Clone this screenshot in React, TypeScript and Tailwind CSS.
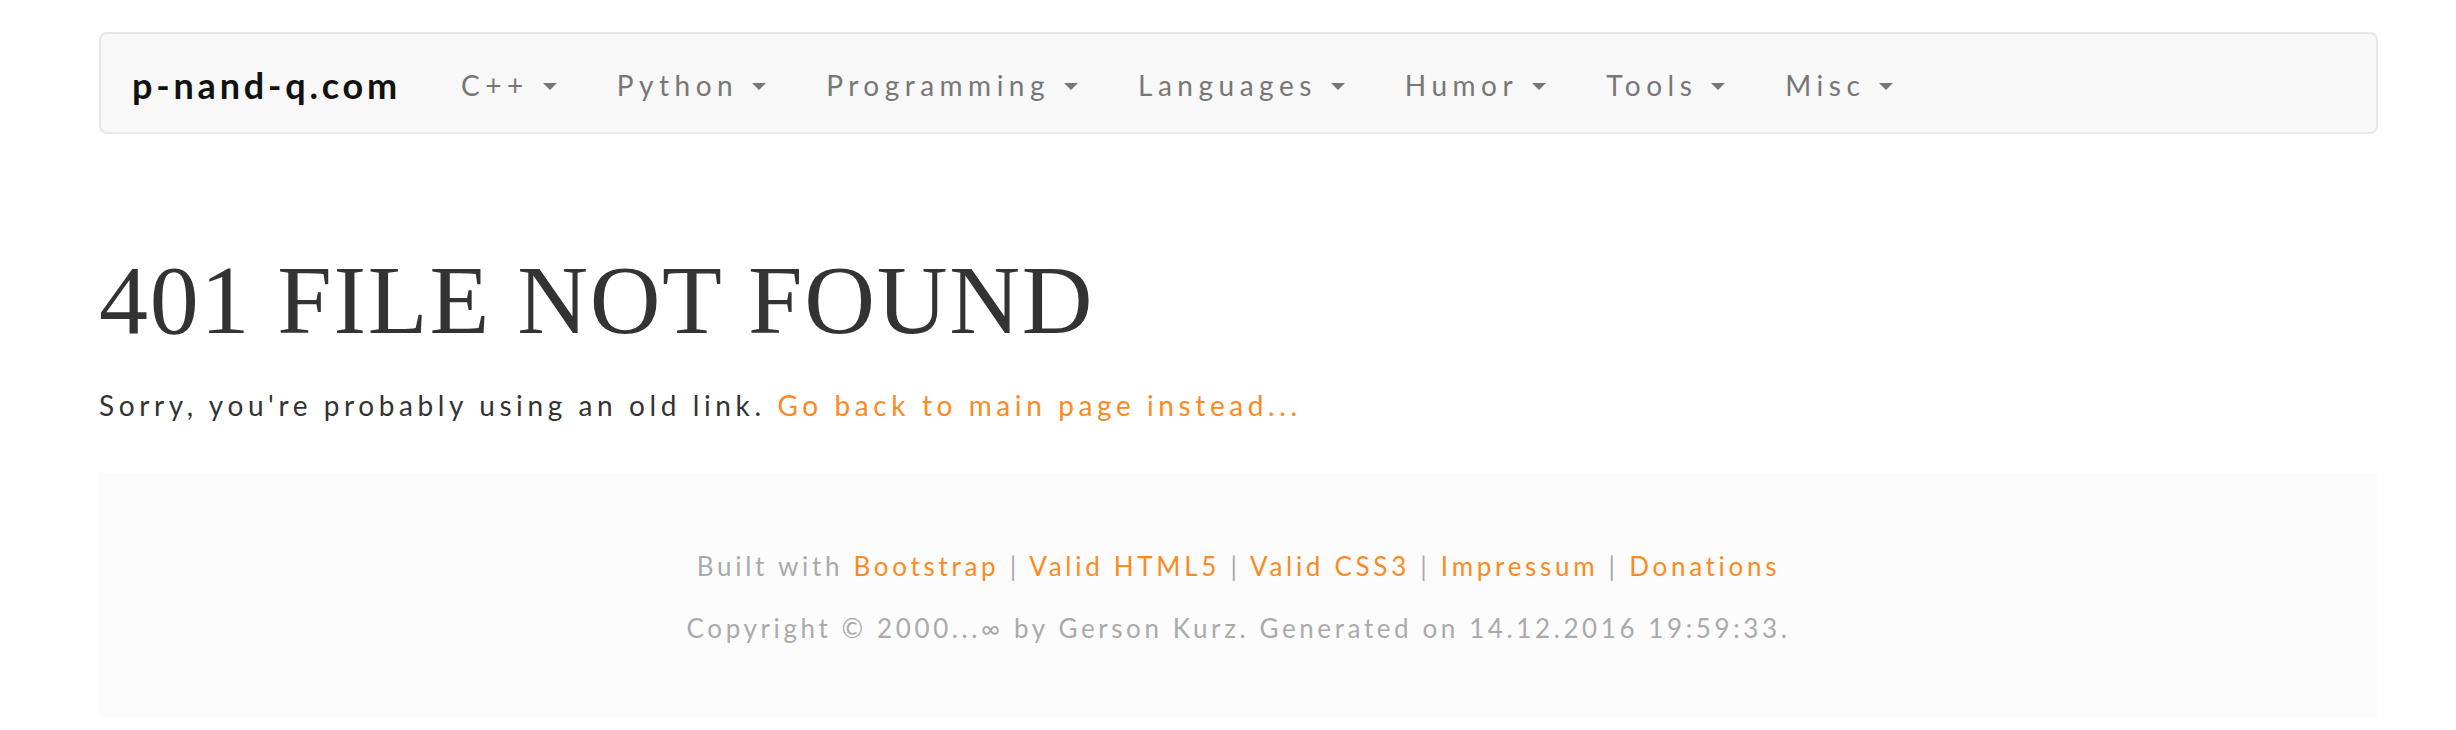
const NAV_ITEMS = ['C++', 'Python', 'Programming', 'Languages', 'Humor', 'Tools', 'Misc'];

const FOOTER_LINKS = ['Bootstrap', 'Valid HTML5', 'Valid CSS3', 'Impressum', 'Donations'];

function Caret() {
  return (
    <span className="ml-[14px] mt-[4px] inline-block h-0 w-0 border-x-[7px] border-t-[7px] border-x-transparent border-t-[#777]" />
  );
}

export default function App() {
  return (
    <div className="min-h-[730px] bg-white font-['Lato','Liberation_Sans',sans-serif]">
      <div className="ml-[99px] w-[2279px]">
        {/* Navbar */}
        <nav className="mt-[32px] flex h-[102px] items-center rounded-[8px] border-2 border-[#e7e7e7] bg-[#f8f8f8] pl-[31px] pt-[3px]">
          <a className="pr-[30px] text-[36px] font-bold leading-none tracking-[3.8px] text-[#111]">p-nand-q.com</a>
          <ul className="flex items-center">
            {NAV_ITEMS.map((item) => (
              <li key={item} className="flex items-center px-[30px] text-[28px] leading-none tracking-[5.5px] text-[#777]">
                <span>{item}</span>
                <Caret />
              </li>
            ))}
          </ul>
        </nav>

        {/* Content */}
        <h1 className="mt-[117px] font-['Liberation_Serif',serif] text-[98px] font-normal leading-none tracking-[1.7px] text-[#333]">
          401 FILE NOT FOUND
        </h1>
        <p className="mt-[42px] text-[28px] leading-none tracking-[4.6px] text-[#333]">
          Sorry, you're probably using an old link.{' '}
          <a className="text-[#fc8a22]">Go back to main page instead...</a>
        </p>

        {/* Footer */}
        <footer className="mt-[54px] h-[245px] bg-[#fcfcfc] pt-[80px] text-center text-[26px] leading-none text-[#aaa]">
          <p className="tracking-[3.7px]">
            Built with{' '}
            {FOOTER_LINKS.map((link, i) => (
              <span key={link}>
                {i > 0 && ' | '}
                <a className="text-[#fc8a22]">{link}</a>
              </span>
            ))}
          </p>
          <p className="mt-[36px] tracking-[3.6px]">
            Copyright © 2000...∞ by Gerson Kurz. Generated on 14.12.2016 19:59:33.
          </p>
        </footer>
      </div>
    </div>
  );
}
